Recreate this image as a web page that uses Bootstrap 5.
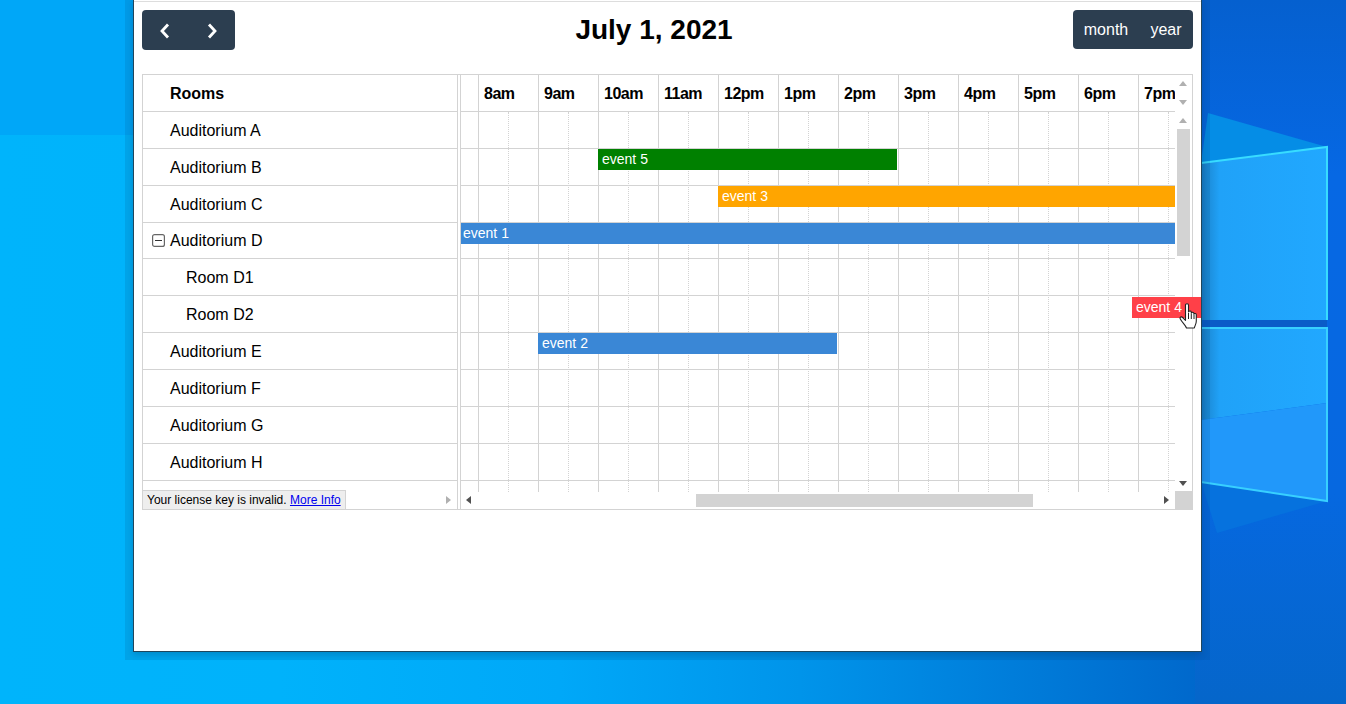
<!DOCTYPE html>
<html lang="en">
<head>
    <meta charset="UTF-8">
    <title>Scheduler</title>
    <link href="https://cdn.jsdelivr.net/npm/bootstrap@5.3.0/dist/css/bootstrap.min.css" rel="stylesheet">
    <style>
        html, body { height: 100%; }
        body {
            font-family: "Liberation Sans", Arial, sans-serif;
            color: #000;
            overflow: hidden;
            background-color: #00b4fa;
            background-image:
                linear-gradient(90deg, #00b4fb 0, #00b2fb 280px, #00a8f8 560px, #0094ea 800px, #007ad8 1040px, #0068cc 1200px, #0060c4 1346px);
        }
        .wall-top { position: absolute; left: 0; top: 0; width: 1346px; height: 704px; }
        .app-win {
            position: relative;
            width: 1069px;
            height: 652px;
            margin-left: 133px;
            padding-top: 1px;
            background: #fff;
            border: 1px solid #20465c;
            border-top: 0;
            box-shadow: 0 0 0 8px rgba(0, 60, 110, .13), 0 3px 6px rgba(0, 40, 90, .2);
        }
        .top-line { height: 1px; background: #ddd; }
        .tool-row { height: 72px; padding: 8px 8px 0 8px; }
        .cal-title { font-size: 28px; font-weight: 700; line-height: 40px; margin: 0; }
        .tool-btn {
            background: #2c3e50;
            border: 0;
            color: #fff;
            font-size: 16px;
            padding: 0;
            border-radius: 4px;
            line-height: 38px;
        }
        .tool-btn:hover { background: #2c3e50; color: #fff; }
        .tool-nav { width: 46.5px; height: 40px; }
        .tool-month { width: 66px; height: 39px; }
        .tool-year { width: 54px; height: 39px; }
        .sched-grid { width: 1051px; height: 436px; margin-left: 8px; border: 1px solid #d3d3d3; }
        .room-panel { width: 315px; border-right: 1px solid #d3d3d3; }
        .room-row {
            height: 37px;
            font-size: 16px;
            border-bottom: 1px solid #d3d3d3;
            padding-left: 27px;
            padding-top: 2px;
            line-height: 1;
        }
        .room-row.row-short { height: 36px; }
        .room-head { font-weight: 700; }
        .room-parent { padding-left: 9px; padding-top: 0; }
        .room-child { padding-left: 43px; }
        .tree-toggle { width: 13px; height: 13px; margin-right: 5px; margin-top: -1px; }
        .license-wrap { height: 19px; }
        .license-box {
            width: 203px;
            background: #eee;
            border-top: 1px solid #d3d3d3;
            border-right: 1px solid #d3d3d3;
            font-size: 12px;
            padding-left: 4px;
            line-height: 18px;
        }
        .license-box a { color: #00e; }
        .time-panel { width: 732px; margin-left: 2px; border-left: 1px solid #d3d3d3; }
        .time-clip { width: 714px; overflow: hidden; }
        .time-head { height: 37px; border-bottom: 1px solid #d3d3d3; }
        .hour-cell {
            flex: 0 0 60px;
            border-right: 1px solid #d3d3d3;
            font-size: 16px;
            font-weight: 700;
            letter-spacing: -.5px;
            padding-left: 5px;
            line-height: 37px;
            white-space: nowrap;
        }
        .hour-first { flex-basis: 18px; padding: 0; }
        .time-body { position: relative; height: 380px; overflow: hidden; }
        .time-cols { position: absolute; left: 0; top: 0; bottom: 0; }
        .time-col { position: relative; flex: 0 0 60px; border-right: 1px solid #d3d3d3; }
        .time-col::after {
            content: "";
            position: absolute;
            left: 29px;
            top: 0;
            bottom: 0;
            border-left: 1px dotted #d3d3d3;
        }
        .time-col.hour-first { flex-basis: 18px; }
        .time-col.hour-first::after { display: none; }
        .time-row { height: 37px; border-bottom: 1px solid #d3d3d3; position: relative; }
        .time-row.row-short { height: 36px; }
        .time-event {
            position: absolute;
            height: 21px;
            color: #fff;
            font-size: 14px;
            line-height: 20px;
            padding-left: 4px;
            white-space: nowrap;
            overflow: hidden;
        }
        .ev-blue { background: #3a87d6; }
        .ev-green { background: #008000; }
        .ev-orange { background: #ffa500; }
        .ev-red { background: #ff4048; }
        .scroll-v { width: 17px; }
        .scroll-head { height: 37px; }
        .scroll-track { height: 380px; position: relative; }
        .scroll-thumb-v { position: absolute; left: 2px; top: 17px; width: 13px; height: 127px; background: #d3d3d3; }
        .scroll-h { height: 17px; position: relative; }
        .scroll-thumb-h { position: absolute; left: 235px; top: 2px; width: 337px; height: 13px; background: #d3d3d3; }
        .scroll-corner { width: 18px; height: 18px; background: #d3d3d3; }
        .tri { position: absolute; width: 0; height: 0; border-style: solid; }
        .tri-up { left: 4px; border-width: 0 4px 5px 4px; border-color: transparent transparent #b0b0b0 transparent; }
        .tri-down { left: 4px; border-width: 5px 4px 0 4px; border-color: #b0b0b0 transparent transparent transparent; }
        .tri-down.tri-dark { border-top-color: #505050; }
        .tri-left { border-width: 4px 5px 4px 0; border-color: transparent #505050 transparent transparent; }
        .tri-right { border-width: 4px 0 4px 5px; border-color: transparent transparent transparent #505050; }
        .tri-right.tri-soft { border-left-color: #b0b0b0; }
        .hand-cursor { position: absolute; left: 1045px; top: 303px; width: 19px; height: 26px; }
    </style>
</head>
<body>

<!-- desktop wallpaper behind the window -->
<svg class="wall-top" viewBox="0 0 1346 704" aria-hidden="true">
    <defs>
        <linearGradient id="wallRight" x1="0" y1="0" x2="0" y2="1">
            <stop offset="0" stop-color="#0560cf"/>
            <stop offset=".25" stop-color="#0668e4"/>
            <stop offset=".7" stop-color="#0668e0"/>
            <stop offset="1" stop-color="#0566ca"/>
        </linearGradient>
        <linearGradient id="paneFade" x1="0" y1="0" x2="1" y2="0">
            <stop offset="0" stop-color="#1a80c8"/>
            <stop offset=".15" stop-color="#20a2f8"/>
            <stop offset="1" stop-color="#21a8ff"/>
        </linearGradient>
    </defs>
    <rect x="0" y="0" width="140" height="135" fill="#00a7f8"/>
    <rect x="1195" y="0" width="151" height="704" fill="url(#wallRight)"/>
    <polygon points="1201,163 1208,113 1327,147" fill="#058de6"/>
    <rect x="1201" y="320" width="126" height="8" fill="#0a5cc8"/>
    <polygon points="1201,163 1327,147 1327,320 1201,320" fill="url(#paneFade)"/>
    <polygon points="1201,328 1327,328 1327,403 1201,420" fill="url(#paneFade)"/>
    <polygon points="1201,420 1327,403 1327,501 1201,482" fill="#2198fa"/>
    <polygon points="1201,482 1327,501 1217,533" fill="#0672de"/>
    <polyline points="1201,163 1327,147 1327,320" fill="none" stroke="#38dcff" stroke-width="2"/>
    <polyline points="1201,328 1327,328 1327,501 1201,482" fill="none" stroke="#38d0ff" stroke-width="2"/>
</svg>

<div class="app-win">
    <div class="top-line"></div>

    <div class="tool-row d-flex justify-content-between align-items-start">
        <div class="btn-group">
            <button type="button" class="btn tool-btn tool-nav" aria-label="Previous">
                <svg width="12" height="16" viewBox="0 0 12 16"><polyline points="9,1.5 3,8 9,14.5" fill="none" stroke="#fff" stroke-width="2.8"/></svg>
            </button>
            <button type="button" class="btn tool-btn tool-nav ms-0" aria-label="Next">
                <svg width="12" height="16" viewBox="0 0 12 16"><polyline points="3,1.5 9,8 3,14.5" fill="none" stroke="#fff" stroke-width="2.8"/></svg>
            </button>
        </div>
        <h2 class="cal-title">July 1, 2021</h2>
        <div class="btn-group">
            <button type="button" class="btn tool-btn tool-month">month</button>
            <button type="button" class="btn tool-btn tool-year ms-0">year</button>
        </div>
    </div>

    <div class="sched-grid d-flex">
        <div class="room-panel d-flex flex-column">
            <div class="room-row room-head d-flex align-items-center">Rooms</div>
            <div class="room-row d-flex align-items-center">Auditorium A</div>
            <div class="room-row d-flex align-items-center">Auditorium B</div>
            <div class="room-row d-flex align-items-center">Auditorium C</div>
            <div class="room-row row-short room-parent d-flex align-items-center">
                <svg class="tree-toggle" viewBox="0 0 13 13"><rect x=".6" y=".6" width="11.800" height="11.800" rx="2" fill="#fff" stroke="#666" stroke-width="1.200"/><rect x="3" y="6" width="7" height="1" fill="#333"/></svg>
                Auditorium D
            </div>
            <div class="room-row room-child d-flex align-items-center">Room D1</div>
            <div class="room-row room-child d-flex align-items-center">Room D2</div>
            <div class="room-row d-flex align-items-center">Auditorium E</div>
            <div class="room-row d-flex align-items-center">Auditorium F</div>
            <div class="room-row d-flex align-items-center">Auditorium G</div>
            <div class="room-row d-flex align-items-center">Auditorium H</div>
            <div class="license-wrap d-flex mt-auto position-relative">
                <div class="license-box">Your license key is invalid. <a href="#">More Info</a></div>
                <span class="tri tri-right tri-soft" style="left: 303px; top: 6px"></span>
            </div>
        </div>

        <div class="time-panel d-flex">
            <div class="time-clip d-flex flex-column">
                <div class="time-head d-flex" id="timeHead"></div>
                <div class="time-body" id="timeBody">
                    <div class="time-cols d-flex" id="timeCols"></div>
                </div>
                <div class="scroll-h">
                    <span class="tri tri-left" style="left: 5px; top: 4px"></span>
                    <div class="scroll-thumb-h"></div>
                    <span class="tri tri-right" style="left: 703px; top: 4px"></span>
                </div>
            </div>
            <div class="scroll-v d-flex flex-column">
                <div class="scroll-head position-relative">
                    <span class="tri tri-up" style="top: 6px"></span>
                    <span class="tri tri-down" style="top: 25px"></span>
                </div>
                <div class="scroll-track">
                    <span class="tri tri-up" style="top: 6px"></span>
                    <div class="scroll-thumb-v"></div>
                    <span class="tri tri-down tri-dark" style="top: 369px"></span>
                </div>
                <div class="scroll-corner"></div>
            </div>
        </div>
    </div>

    <!-- event being dragged, sits over the scrollbar -->
    <div class="time-event ev-red" style="left: 998px; top: 297px; width: 69px">event 4</div>
    <svg class="hand-cursor" viewBox="0 0 19 26">
        <path d="M6.5 2c0-1.6 3-1.6 3 0v7c.3-1.3 2.6-1.3 2.8 0v1c.4-1.1 2.4-1.1 2.6.2v.9c.4-.9 2.4-.8 2.4.6V18c0 3-1.4 4.400-2 7H7.500C6.400 22 3.500 20 1.300 16c-.9-1.700 1-2.900 2.400-1.500l2.800 2.800z" fill="#fff" stroke="#222" stroke-width="1.100" stroke-linejoin="round"/>
        <path d="M9.500 10v6M12.300 10.500V16M15 11.500V16" fill="none" stroke="#222" stroke-width="1"/>
    </svg>
</div>

<script src="https://cdn.jsdelivr.net/npm/bootstrap@5.3.0/dist/js/bootstrap.bundle.min.js"></script>
<script>
    const hours = ['8am', '9am', '10am', '11am', '12pm', '1pm', '2pm', '3pm', '4pm', '5pm', '6pm', '7pm'];
    const head = document.getElementById('timeHead');
    const cols = document.getElementById('timeCols');
    const body = document.getElementById('timeBody');

    head.innerHTML = '<div class="hour-cell hour-first"></div>' +
        hours.map(h => `<div class="hour-cell">${h}</div>`).join('');
    cols.innerHTML = '<div class="time-col hour-first"></div>' +
        hours.map(() => '<div class="time-col"></div>').join('');

    // 10 rows, the 4th one is a pixel shorter like the room list
    for (let i = 0; i < 10; i++) {
        const row = document.createElement('div');
        row.className = 'time-row' + (i === 3 ? ' row-short' : '');
        body.appendChild(row);
    }

    const events = [
        { text: 'event 5', color: 'ev-green', x: 137, y: 37, w: 299 },
        { text: 'event 3', color: 'ev-orange', x: 257, y: 74, w: 457 },
        { text: 'event 1', color: 'ev-blue', x: 0, y: 111, w: 714, pad: 2 },
        { text: 'event 2', color: 'ev-blue', x: 77, y: 221, w: 299 }
    ];
    events.forEach(e => {
        const el = document.createElement('div');
        el.className = 'time-event ' + e.color;
        el.textContent = e.text;
        el.style.left = e.x + 'px';
        el.style.top = e.y + 'px';
        el.style.width = e.w + 'px';
        if (e.pad) el.style.paddingLeft = e.pad + 'px';
        body.appendChild(el);
    });
</script>
</body>
</html>
